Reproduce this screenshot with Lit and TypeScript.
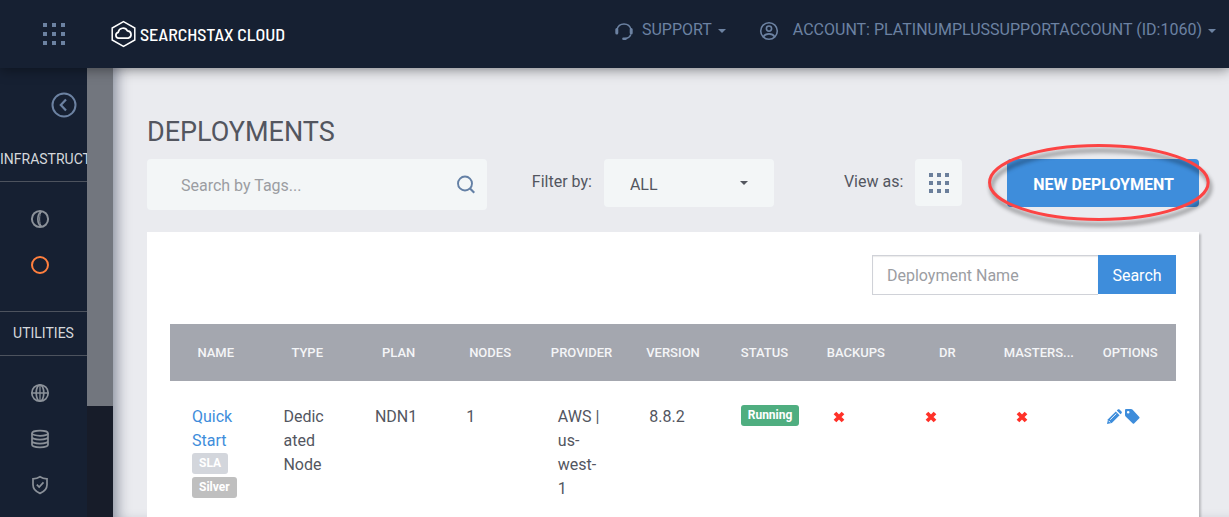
import { LitElement, html, svg, css } from "lit";
import { customElement } from "lit/decorators.js";

interface Deployment {
  name: string;
  tags: { label: string; tone: string }[];
  type: string;
  plan: string;
  nodes: number;
  provider: string;
  version: string;
  status: string;
}

const HEADINGS = [
  "Name", "Type", "Plan", "Nodes", "Provider", "Version",
  "Status", "Backups", "DR", "Masters...", "Options",
];

const DEPLOYMENTS: Deployment[] = [
  {
    name: "Quick Start",
    tags: [
      { label: "SLA", tone: "sla" },
      { label: "Silver", tone: "silver" },
    ],
    type: "Dedicated Node",
    plan: "NDN1",
    nodes: 1,
    provider: "AWS | us-west-1",
    version: "8.8.2",
    status: "Running",
  },
];

const dots = (size: number, dot: number, step: number) => html`
  <svg width=${size} height=${size} viewBox="0 0 ${size} ${size}" fill="currentColor" shape-rendering="crispEdges" aria-hidden="true">
    ${[0, 1, 2].map((r) => [0, 1, 2].map((c) => svg`<rect x=${c * step} y=${r * step} width=${dot} height=${dot} />`))}
  </svg>
`;

const caret = html`
  <svg class="caret" width="8" height="4" viewBox="0 0 8 4" fill="currentColor" aria-hidden="true"><path d="M0 0h8L4 4z" /></svg>
`;

const cross = html`
  <svg class="cross" width="12" height="12" viewBox="0 0 12 12" role="img" aria-label="No">
    <path d="M2 2 10 10M10 2 2 10" stroke="#ff3128" stroke-width="3.8" />
  </svg>
`;

const sideIcon = (body: unknown) => html`
  <svg width="20" height="20" viewBox="0 0 20 20" fill="none" stroke="currentColor" stroke-width="1.7" aria-hidden="true">${body}</svg>
`;

const ICONS = {
  crescent: svg`<circle cx="10" cy="10" r="8.1" stroke-width="2" /><path d="M11.6 2.4C6.600 5 6.600 15 11.600 17.600" /><path d="M11.600 2.400C9 5 9 15 11.600 17.600" stroke-width="1" />`,
  ring: svg`<circle cx="10" cy="10" r="8" stroke-width="2" />`,
  globe: svg`<circle cx="10" cy="10" r="8.2" /><ellipse cx="10" cy="10" rx="3.8" ry="8.2" /><path d="M1.8 10h16.4M10 1.8v16.4" stroke-width="1.3" />`,
  database: svg`<ellipse cx="10" cy="4.2" rx="8" ry="2.6" /><path d="M2 4.2v11.6c0 1.4 3.6 2.6 8 2.6s8-1.2 8-2.6V4.2M2 8.1c0 1.4 3.6 2.6 8 2.6s8-1.2 8-2.6M2 12c0 1.4 3.6 2.6 8 2.6s8-1.2 8-2.6" />`,
  shield: svg`<path d="M10 1.8c2 1.4 4.4 2 7 2v6c0 4-2.8 6.9-7 8.6-4.200-1.700-7-4.600-7-8.600v-6c2.600 0 5-.6 7-2z" /><path d="M6.800 9.600 9.200 12l4.300-4.600" />`,
};

@customElement("top-bar")
export class TopBar extends LitElement {
  static styles = css`
    :host {
      display: block;
      position: relative;
      z-index: 2;
      background: #162032;
      box-shadow: 0 2px 12px rgba(0, 0, 0, 0.4);
      color: #6c82a2;
    }
    .bar {
      display: flex;
      align-items: center;
      height: 68px;
      padding: 0 13px 0 43px;
    }
    button {
      border: 0;
      padding: 0;
      background: none;
      color: inherit;
      font: inherit;
      text-transform: inherit;
      display: flex;
      align-items: center;
      cursor: pointer;
    }
    a {
      display: flex;
      align-items: center;
      gap: 4px;
      margin-left: 46px;
      color: #fff;
      text-decoration: none;
      font: 500 18px/24px "Barlow Semi Condensed", "Roboto Condensed", Roboto, sans-serif;
      text-transform: uppercase;
    }
    .menus {
      display: flex;
      margin-left: auto;
      gap: 33px;
      padding-bottom: 8px;
      text-transform: uppercase;
    }
    .label { margin-left: 8px; }
    .account .label { margin-left: 14px; }
    .caret { margin: 2px 0 0 6px; }
    .glyph { margin-top: 2px; }
  `;

  render() {
    return html`
      <header class="bar">
        <button aria-label="Apps">${dots(22, 4, 9)}</button>
        <a href="#">
          <svg width="25" height="28" viewBox="0 0 25 28" fill="none" stroke="#fff" aria-hidden="true">
            <path d="M12.500 1.700 23.800 8v12L12.500 26.300 1.200 20V8z" stroke-width="1.500" />
            <path d="M7.600 18.200a3 3 0 0 1-.4-5.900 4.900 4.900 0 0 1 9.200-1.400 3.700 3.700 0 0 1 .8 7.300z" stroke-width="1.700" stroke-linejoin="round" />
          </svg>
          <span>SearchStax Cloud</span>
        </a>
        <nav class="menus">
          <button>
            <svg class="glyph" width="20" height="20" viewBox="0 0 20 20" fill="none" stroke="currentColor" aria-hidden="true">
              <path d="M3 8.500a7.200 7.200 0 0 1 14 0M16.800 13.500c-.8 2.400-2.700 3.700-5.300 4" stroke-width="1.500" />
              <path d="M2.800 8.500v3.500M17.200 8.500v3.500" stroke-width="3" stroke-linecap="round" />
              <path d="M9.500 17.700h2" stroke-width="2.600" stroke-linecap="round" />
            </svg>
            <span class="label">Support</span>${caret}
          </button>
          <button class="account">
            <svg class="glyph" width="20" height="20" viewBox="0 0 20 20" fill="none" stroke="currentColor" stroke-width="1.600" aria-hidden="true">
              <circle cx="10" cy="10" r="8.300" />
              <circle cx="10" cy="7.600" r="2.600" />
              <path d="M4.300 15.800c1.200-2 3.200-2.900 5.700-2.900s4.500.9 5.700 2.900" />
            </svg>
            <span class="label">Account: PlatinumPlusSupportAccount (ID:1060)</span>${caret}
          </button>
        </nav>
      </header>
    `;
  }
}

@customElement("side-bar")
export class SideBar extends LitElement {
  static styles = css`
    :host {
      display: flex;
      flex: none;
      width: 113px;
      overflow: hidden;
      background: #162032;
      color: #8b9199;
    }
    nav {
      flex: 1;
      min-width: 0;
      overflow: hidden;
    }
    .toggle {
      display: block;
      margin: 24px 10px 20px auto;
      border: 0;
      padding: 0;
      height: 26px;
      background: none;
      color: #6c82a2;
    }
    h2 {
      display: flex;
      justify-content: center;
      margin: 0;
      border-bottom: 1px solid #4d535e;
      font-size: 14px;
      font-weight: 400;
      line-height: 43px;
      text-transform: uppercase;
      color: #d5d8dc;
    }
    h2.long { justify-content: flex-start; }
    ul {
      list-style: none;
      margin: 0;
      padding: 14px 0 23px;
    }
    ul.split { border-bottom: 1px solid #4d535e; }
    li a {
      display: flex;
      align-items: center;
      justify-content: center;
      height: 46px;
      padding-right: 7px;
      color: inherit;
    }
    li a.active { color: #ff7f3e; }
    .track {
      width: 26px;
      background: #171c29;
    }
    .thumb {
      height: 338px;
      background: #72767e;
    }
  `;

  render() {
    return html`
      <nav>
        <button class="toggle" aria-label="Collapse menu">
          <svg width="26" height="26" viewBox="0 0 26 26" fill="none" stroke="currentColor" aria-hidden="true">
            <circle cx="13" cy="13" r="11.500" stroke-width="2" />
            <path d="M15 7.500 9.800 13l5.200 5.500" stroke-width="2.200" />
          </svg>
        </button>
        <h2 class="long">Infrastructure</h2>
        <ul class="split">
          <li><a href="#" aria-label="Zookeeper">${sideIcon(ICONS.crescent)}</a></li>
          <li><a href="#" class="active" aria-label="Deployments">${sideIcon(ICONS.ring)}</a></li>
        </ul>
        <h2>Utilities</h2>
        <ul>
          <li><a href="#" aria-label="DNS">${sideIcon(ICONS.globe)}</a></li>
          <li><a href="#" aria-label="Storage">${sideIcon(ICONS.database)}</a></li>
          <li><a href="#" aria-label="Security">${sideIcon(ICONS.shield)}</a></li>
        </ul>
      </nav>
      <div class="track"><div class="thumb"></div></div>
    `;
  }
}

@customElement("deployment-table")
export class DeploymentTable extends LitElement {
  static styles = css`
    :host { display: block; }
    table {
      width: 100%;
      table-layout: fixed;
      border-collapse: collapse;
    }
    th {
      height: 57px;
      padding: 0;
      background: #a4a7af;
      color: #f4f5f7;
      font-size: 13px;
      font-weight: 500;
      text-transform: uppercase;
    }
    td {
      padding: 24px 23px 24px 22px;
      vertical-align: top;
      line-height: 24px;
      overflow-wrap: break-word;
    }
    a {
      color: #3e8ddb;
      text-decoration: none;
    }
    .badge {
      display: block;
      width: fit-content;
      border-radius: 3px;
      margin-bottom: 3px;
      padding: 0 7px;
      color: #fff;
      font-size: 12px;
      font-weight: 700;
      line-height: 21px;
    }
    .sla { background: #d3d6dc; }
    .silver { background: #bfbfbf; }
    .running { background: #4fae80; }
    .cross {
      display: block;
      margin: 6px 0 0 1px;
    }
    .options {
      display: flex;
      gap: 3px;
      padding-top: 4px;
    }
    .options a { display: flex; }
  `;

  private row(d: Deployment) {
    return html`
      <tr>
        <td>
          <a href="#">${d.name}</a>
          ${d.tags.map((t) => html`<span class="badge ${t.tone}">${t.label}</span>`)}
        </td>
        <td>${d.type}</td>
        <td>${d.plan}</td>
        <td>${d.nodes}</td>
        <td>${d.provider}</td>
        <td>${d.version}</td>
        <td><span class="badge running">${d.status}</span></td>
        <td>${cross}</td>
        <td>${cross}</td>
        <td>${cross}</td>
        <td>
          <div class="options">
            <a href="#" aria-label="Edit">
              <svg width="15" height="15" viewBox="0 0 15 15" fill="currentColor" aria-hidden="true">
                <path d="M0 15 1 10.200 8.800 2.400l3.800 3.800L4.800 14z" />
                <path d="M9.800 1.500 10.800.6c.5-.5 1.200-.5 1.700 0l2 2c.5.5.5 1.200 0 1.700l-1 1z" />
                <path d="M3.200 10.700 9.300 4.600" stroke="#fff" stroke-width=".9" />
                <path d="M1.600 11.800l1.600 1.600" stroke="#fff" stroke-width=".9" />
              </svg>
            </a>
            <a href="#" aria-label="Tags">
              <svg width="15" height="15" viewBox="0 0 15 15" fill="currentColor" aria-hidden="true">
                <path fill-rule="evenodd" d="M1.200 0H6c.6 0 1 .2 1.400.6L14.300 8c.4.4.4.9 0 1.300l-5.200 5.200c-.4.4-.9.4-1.300 0L.6 7.400C.2 7 0 6.600 0 6V1.200C0 .5.5 0 1.200 0zM3.200 1.900a1.300 1.300 0 1 0 0 2.600 1.300 1.300 0 0 0 0-2.600z" />
              </svg>
            </a>
          </div>
        </td>
      </tr>
    `;
  }

  render() {
    return html`
      <table>
        <thead><tr>${HEADINGS.map((h) => html`<th scope="col">${h}</th>`)}</tr></thead>
        <tbody>${DEPLOYMENTS.map((d) => this.row(d))}</tbody>
      </table>
    `;
  }
}

@customElement("app-root")
export class AppRoot extends LitElement {
  static styles = css`
    :host {
      display: flex;
      flex-direction: column;
      height: 100vh;
      overflow: hidden;
      background: #eaebef;
      color: #53565f;
      font: 16px/24px Roboto, sans-serif;
    }
    * { box-sizing: border-box; }
    .body {
      display: flex;
      flex: 1;
      min-height: 0;
    }
    main {
      flex: 1;
      min-width: 0;
      display: flex;
      flex-direction: column;
      padding: 47px 30px 0 34px;
      box-shadow: inset 12px 0 14px -8px rgba(40, 50, 75, 0.5);
    }
    h1 {
      margin: 0 0 10px;
      font-size: 27px;
      font-weight: 400;
      line-height: 34px;
      text-transform: uppercase;
    }
    input, select, button {
      font: inherit;
      border: 0;
      border-radius: 0;
      outline: 0;
    }
    .toolbar {
      display: flex;
      align-items: flex-start;
      margin-bottom: 22px;
    }
    .tags {
      display: flex;
      align-items: center;
      flex: 1;
      height: 51px;
      border-radius: 4px;
      padding: 0 12px 0 34px;
      background: #f3f6f7;
    }
    .tags input {
      flex: 1;
      min-width: 0;
      padding: 2px 0 0;
      background: none;
    }
    .tags button {
      display: flex;
      padding: 0;
      background: none;
      color: #6480a5;
    }
    ::placeholder {
      color: #9b9da2;
      opacity: 1;
    }
    .caption {
      padding-top: 11px;
      margin-right: 12px;
    }
    .filter, .view {
      display: flex;
      align-items: flex-start;
    }
    .filter { margin-left: 45px; }
    .view { margin-left: 70px; }
    .select {
      display: grid;
      align-items: center;
      width: 170px;
      height: 48px;
    }
    .select > * { grid-area: 1 / 1; }
    .select select {
      appearance: none;
      width: 100%;
      height: 48px;
      border-radius: 4px;
      padding: 3px 26px 0;
      background: #f3f6f7;
      color: inherit;
    }
    .select .caret {
      justify-self: end;
      margin-right: 26px;
      pointer-events: none;
    }
    .view button {
      display: flex;
      align-items: center;
      justify-content: center;
      width: 47px;
      height: 47px;
      border-radius: 4px;
      padding: 0;
      background: #f3f6f7;
      color: #6b7f9b;
    }
    .create {
      position: relative;
      margin-left: 45px;
    }
    .create button {
      height: 48px;
      border-radius: 4px;
      padding: 3px 25px 0 26px;
      background: #3e8ddb;
      color: #fff;
      font-weight: 700;
      text-transform: uppercase;
      white-space: nowrap;
    }
    .ring {
      position: absolute;
      left: -19px;
      top: -15px;
      width: calc(100% + 30px);
      height: 77px;
      overflow: visible;
      pointer-events: none;
      filter: drop-shadow(2px 5px 2px rgba(0, 0, 0, 0.45));
    }
    .card {
      flex: 1;
      padding: 23px;
      background: #fff;
      box-shadow: 2px 2px 2px rgba(0, 0, 0, 0.2);
    }
    .find {
      display: flex;
      justify-content: flex-end;
      align-items: flex-start;
      margin-bottom: 29px;
    }
    .find input {
      width: 226px;
      height: 40px;
      border: 1px solid #d0d2d8;
      border-right: 0;
      padding: 0 14px;
      background: #fff;
      box-shadow: inset 0 1px 1px rgba(0, 0, 0, 0.08);
    }
    .find button {
      min-width: 78px;
      height: 39px;
      padding: 2px 14px 0;
      background: #3e8ddb;
      color: #fff;
    }
  `;

  render() {
    return html`
      <top-bar></top-bar>
      <div class="body">
        <side-bar></side-bar>
        <main>
          <h1>Deployments</h1>
          <div class="toolbar">
            <form class="tags" role="search">
              <input type="text" placeholder="Search by Tags..." aria-label="Search by Tags" />
              <button type="button" aria-label="Search tags">
                <svg width="19" height="20" viewBox="0 0 19 20" fill="none" stroke="currentColor" aria-hidden="true">
                  <circle cx="9" cy="8.500" r="7" stroke-width="1.900" />
                  <path d="M13.800 13.300 18.300 17.800" stroke-width="2.200" />
                </svg>
              </button>
            </form>
            <div class="filter">
              <label class="caption" for="filter">Filter by:</label>
              <div class="select">
                <select id="filter"><option>ALL</option></select>
                ${caret}
              </div>
            </div>
            <div class="view">
              <label class="caption" for="view">View as:</label>
              <button id="view" aria-label="View as grid">${dots(20, 4, 8)}</button>
            </div>
            <div class="create">
              <button>New Deployment</button>
              <svg class="ring" aria-hidden="true">
                <ellipse cx="50%" cy="50%" rx="49.300%" ry="37" fill="none" stroke="#fc4444" stroke-width="3" />
              </svg>
            </div>
          </div>
          <section class="card">
            <form class="find">
              <input type="text" placeholder="Deployment Name" aria-label="Deployment Name" />
              <button type="button">Search</button>
            </form>
            <deployment-table></deployment-table>
          </section>
        </main>
      </div>
    `;
  }
}
